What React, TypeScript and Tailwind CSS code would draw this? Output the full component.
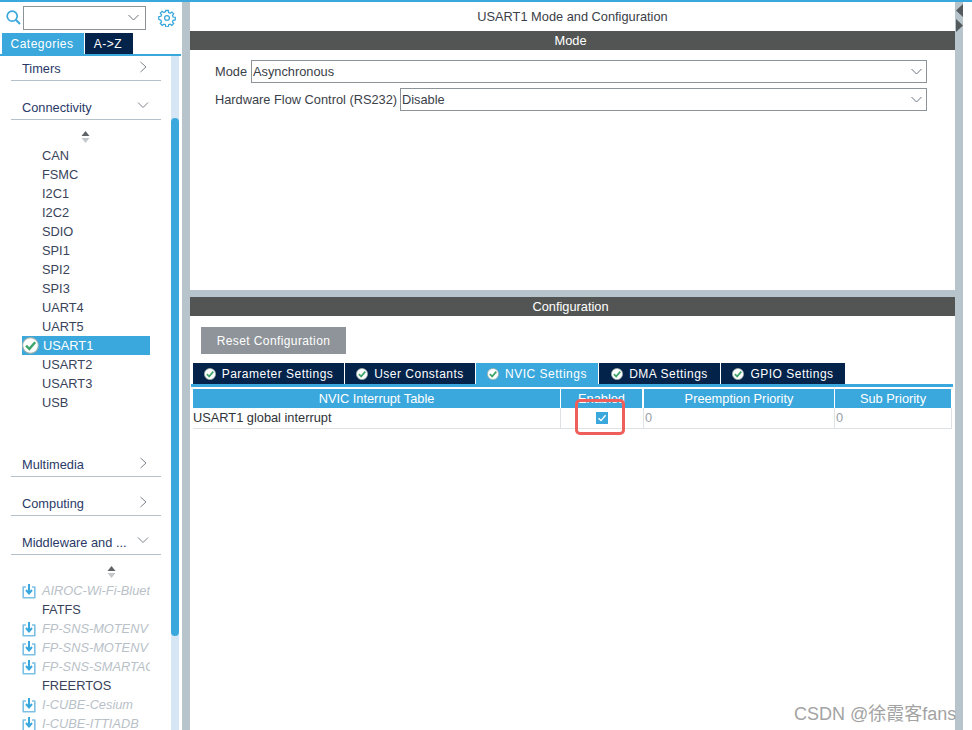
import { JSX } from "react";

const peripherals = ["CAN", "FSMC", "I2C1", "I2C2", "SDIO", "SPI1", "SPI2", "SPI3", "UART4", "UART5", "USART1", "USART2", "USART3", "USB"];

const middleware = [
  { name: "AIROC-Wi-Fi-Bluetooth", pack: true },
  { name: "FATFS", pack: false },
  { name: "FP-SNS-MOTENV", pack: true },
  { name: "FP-SNS-MOTENV", pack: true },
  { name: "FP-SNS-SMARTAG1", pack: true },
  { name: "FREERTOS", pack: false },
  { name: "I-CUBE-Cesium", pack: true },
  { name: "I-CUBE-ITTIADB", pack: true },
];

const tabs = [
  { label: "Parameter Settings", width: "w-[152px]", active: false },
  { label: "User Constants", width: "w-[131px]", active: false },
  { label: "NVIC Settings", width: "w-[123px]", active: true },
  { label: "DMA Settings", width: "w-[122px]", active: false },
  { label: "GPIO Settings", width: "w-[125px]", active: false },
];

function Chevron({ down }: { down: boolean }): JSX.Element {
  return (
    <svg width="12" height="12" viewBox="0 0 12 12" fill="none" stroke="#7b838c" strokeWidth="1" className={down ? "mb-[5px]" : "mb-[3px]"}>
      <path d={down ? "M1 3.5 6 8.5 11 3.5" : "M3.5 1 9 6 3.5 11"} />
    </svg>
  );
}

function SelectArrow(): JSX.Element {
  return (
    <svg width="11" height="7" viewBox="0 0 11 7" fill="none" stroke="#6b7480" strokeWidth="1">
      <path d="M.5 1 5.5 6 10.5 1" />
    </svg>
  );
}

function SortArrows(): JSX.Element {
  return (
    <svg width="9" height="12" viewBox="0 0 9 12">
      <path d="M4.5 0 8.5 5H.5Z" fill="#5f6468" />
      <path d="M.5 7h8l-4 5Z" fill="#c3c7ca" />
    </svg>
  );
}

function PackIcon(): JSX.Element {
  return (
    <svg width="14" height="16" viewBox="0 0 14 16" fill="none" className="shrink-0">
      <path d="M4 4H1.2v10.8h11.6V4H10" stroke="#7cc0e6" strokeWidth="1.6" strokeLinejoin="round" />
      <path d="M7 1v9M4 7l3 3.4L10 7" stroke="#3aa8dc" strokeWidth="2" />
    </svg>
  );
}

function CheckBadge({ size }: { size: number }): JSX.Element {
  return (
    <svg width={size} height={size} viewBox="0 0 16 16" className="shrink-0">
      <circle cx="8" cy="8" r="7.4" fill="#ffffff" stroke="#9fb0a8" strokeWidth="1" />
      <path d="M3.8 8.2 6.9 11.2 12.4 4.9" fill="none" stroke="#3fa66a" strokeWidth="2.3" />
    </svg>
  );
}

function SectionHeader({ label, open }: { label: string; open: boolean }): JSX.Element {
  return (
    <div className="ml-[11px] w-[150px] h-[24px] flex items-center justify-between pl-[11px] pr-[12px] text-[#2a3a68] border-b border-[#b5c1c8]">
      <span className="truncate">{label}</span>
      <Chevron down={open} />
    </div>
  );
}

function Sidebar(): JSX.Element {
  return (
    <aside className="w-[182px] h-full shrink-0 flex flex-col overflow-hidden">
      {/* search */}
      <div className="h-[31px] shrink-0 flex items-center pl-[6px]">
        <svg width="15" height="15" viewBox="0 0 15 15" fill="none" stroke="#3aa8dc" strokeWidth="1.7" className="shrink-0">
          <circle cx="6.2" cy="6.2" r="5" />
          <path d="M9.8 9.8 14 14" strokeWidth="2" />
        </svg>
        <div className="ml-[2px] w-[123px] h-[24px] border border-[#8d9499] flex items-center justify-end pr-[6px]">
          <SelectArrow />
        </div>
        <svg width="18" height="18" viewBox="0 0 24 24" fill="none" stroke="#3aa8dc" strokeWidth="1.7" className="ml-[12px] shrink-0">
          <circle cx="12" cy="12" r="3.2" />
          <path d="M10.3 2h3.4l.5 2.8 2 .8 2.3-1.6 2.4 2.4-1.6 2.3.8 2 2.9.5v3.4l-2.9.5-.8 2 1.6 2.3-2.4 2.4-2.3-1.6-2 .8-.5 2.8h-3.4l-.5-2.8-2-.8-2.3 1.6-2.4-2.4 1.6-2.3-.8-2L1 13.6v-3.4l2.9-.5.8-2-1.6-2.3 2.4-2.4 2.3 1.6 2-.8Z" />
        </svg>
      </div>
      {/* tabs */}
      <div className="h-[21px] shrink-0 flex pl-[2px] text-[12px] tracking-[0.5px] text-white">
        <div className="w-[82px] pr-[2px] bg-[#3aa8dc] flex items-center justify-center">Categories</div>
        <div className="ml-[1px] w-[48px] pr-[2px] bg-[#03234b] flex items-center justify-center">A-&gt;Z</div>
      </div>
      <div className="h-[2px] shrink-0 mr-[1px] bg-[#3aa8dc]" />
      {/* tree + scrollbar */}
      <div className="flex-1 min-h-0 flex">
        <div className="w-[171px] shrink-0 pt-[1px] overflow-hidden text-[12.8px]">
          <SectionHeader label="Timers" open={false} />
          <div className="mt-[15px]"><SectionHeader label="Connectivity" open /></div>
          <div className="ml-[11px] w-[148px] flex justify-center mt-[11px] mb-[3px]"><SortArrows /></div>
          <ul className="ml-[22px] w-[128px]">
            {peripherals.map((name) => (
              <li key={name} className={`h-[19px] flex items-center ${name === "USART1" ? "bg-[#3aa8dc] text-white" : "text-[#39435a]"}`}>
                {name === "USART1" ? <CheckBadge size={17} /> : <span className="w-[20px] shrink-0" />}
                <span className={name === "USART1" ? "ml-[4px]" : ""}>{name}</span>
              </li>
            ))}
          </ul>
          <div className="mt-[41px]"><SectionHeader label="Multimedia" open={false} /></div>
          <div className="mt-[15px]"><SectionHeader label="Computing" open={false} /></div>
          <div className="mt-[15px]"><SectionHeader label="Middleware and ..." open /></div>
          <div className="ml-[36px] w-[150px] flex justify-center mt-[11px] mb-[3px]"><SortArrows /></div>
          <ul className="ml-[22px] w-[128px]">
            {middleware.map((m, i) => (
              <li key={i} className="h-[19px] flex items-center overflow-hidden whitespace-nowrap">
                {m.pack ? <PackIcon /> : <span className="w-[14px] shrink-0" />}
                <span className={`ml-[6px] ${m.pack ? "italic text-[#b9c1c8]" : "text-[#39435a]"}`}>{m.name}</span>
              </li>
            ))}
          </ul>
        </div>
        <div className="w-[8px] shrink-0 bg-[#d6e6f4] pt-[62px]">
          <div className="h-[518px] bg-[#3aa8dc] rounded-[4px]" />
        </div>
      </div>
    </aside>
  );
}

function SelectRow({ label, value, labelWidth }: { label: string; value: string; labelWidth: string }): JSX.Element {
  return (
    <div className="flex items-center pl-[25px] pr-[28px] h-[23px]">
      <span className={`${labelWidth} shrink-0 whitespace-nowrap`}>{label}</span>
      <div className="flex-1 h-[23px] border border-[#8d9499] flex items-center justify-between pl-[1px] pr-[4px]">
        <span>{value}</span>
        <SelectArrow />
      </div>
    </div>
  );
}

function Th({ label, width }: { label: string; width: string }): JSX.Element {
  return <div className={`${width} shrink-0 h-[19px] bg-[#3aa8dc] text-white flex items-center justify-center`}>{label}</div>;
}

function MainPanel(): JSX.Element {
  return (
    <main className="w-[765px] h-full shrink-0 flex flex-col text-[12.8px] text-[#3b4148]">
      <section className="h-[288px] shrink-0">
        <div className="h-[29px] flex items-center justify-center">USART1 Mode and Configuration</div>
        <div className="h-[19px] pr-[4px] bg-[#535554] text-white flex items-center justify-center">Mode</div>
        <div className="mt-[10px] flex flex-col gap-[5px]">
          <SelectRow label="Mode" value="Asynchronous" labelWidth="w-[36px]" />
          <SelectRow label="Hardware Flow Control (RS232)" value="Disable" labelWidth="w-[185px]" />
        </div>
      </section>
      <div className="h-[7px] shrink-0 bg-[#b8c4cb]" />
      <section className="flex-1 min-h-0">
        <div className="h-[19px] pr-[4px] bg-[#535554] text-white flex items-center justify-center">Configuration</div>
        <button className="mt-[11px] ml-[11px] w-[145px] h-[27px] bg-[#8e9499] text-white text-[12px] tracking-[0.4px] flex items-center justify-center">Reset Configuration</button>
        <div className="mt-[9px] ml-[3px] flex h-[21px] text-[12px] tracking-[0.5px]">
          {tabs.map((t) => (
            <div key={t.label} className={`${t.width} shrink-0 border-r border-white flex items-center justify-center gap-[6px] text-white ${t.active ? "bg-[#3aa8dc]" : "bg-[#03234b]"}`}>
              <CheckBadge size={12} />
              {t.label}
            </div>
          ))}
        </div>
        <div className="ml-[1px] mr-[2px] h-[3px] bg-[#3aa8dc]" />
        <div className="ml-[3px] mt-[2px] w-[759px]">
          <div className="flex">
            <Th label="NVIC Interrupt Table" width="w-[367px]" />
            <div className="ml-[1px]"><Th label="Enabled" width="w-[81px]" /></div>
            <div className="ml-[2px]"><Th label="Preemption Priority" width="w-[190px]" /></div>
            <div className="ml-[1px]"><Th label="Sub Priority" width="w-[116px]" /></div>
          </div>
          <div className="flex h-[21px] border-b border-[#dfe2e4] text-[#2e3338]">
            <div className="w-[368px] border-r border-[#dfe2e4] flex items-center">USART1 global interrupt</div>
            <div className="relative w-[83px] border-r border-[#dfe2e4] flex items-center justify-center">
              <span className="w-[12px] h-[12px] bg-[#3aa8dc] flex items-center justify-center">
                <svg width="10" height="10" viewBox="0 0 10 10" fill="none" stroke="#ffffff" strokeWidth="1.4">
                  <path d="M1.5 5.2 4 7.6 8.6 2.2" />
                </svg>
              </span>
              <span className="absolute left-[14px] top-[-9px] w-[50px] h-[36px] border-[3px] border-[#ee5f5b] rounded-[5px]" />
            </div>
            <div className="w-[191px] border-r border-[#dfe2e4] flex items-center pl-[1px] text-[#9aa1a8]">0</div>
            <div className="w-[117px] border-r border-[#dfe2e4] flex items-center pl-[1px] text-[#9aa1a8]">0</div>
          </div>
        </div>
      </section>
    </main>
  );
}

export default function App(): JSX.Element {
  return (
    <div className="relative w-[972px] h-[730px] overflow-hidden bg-white flex flex-col font-['Liberation_Sans',sans-serif]">
      <div className="h-[2px] shrink-0 bg-[#3aa8dc]" />
      <div className="flex-1 min-h-0 flex">
        <Sidebar />
        <div className="w-[8px] shrink-0 bg-[#b8c4cb]" />
        <MainPanel />
        <div className="w-[8px] shrink-0 bg-[#b8c4cb] flex flex-col items-center pt-[2px] gap-[2px]">
          <svg width="7" height="13" viewBox="0 0 7 13"><path d="M7 0v13L0 6.5Z" fill="#555a5e" /></svg>
          <svg width="7" height="13" viewBox="0 0 7 13"><path d="M0 0v13l7-6.5Z" fill="#555a5e" /></svg>
        </div>
      </div>
      <span className="absolute left-[794px] top-[701px] text-[18px] text-[#a3a3a3] font-['Liberation_Sans','Noto_Sans_CJK_SC',sans-serif]">CSDN @徐霞客fans</span>
    </div>
  );
}
